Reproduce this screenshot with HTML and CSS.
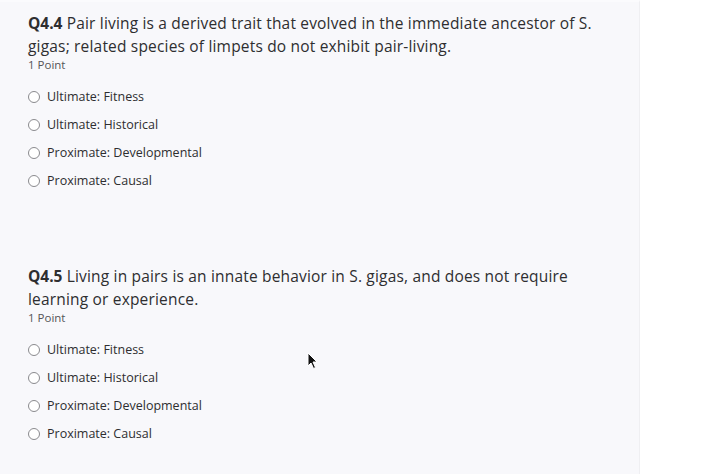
FILE: index.html
```html
<!DOCTYPE html>
<html>
<head>
<meta charset="utf-8">
<link rel="stylesheet" href="styles.css">
</head>
<body>
<div class="page">
  <main class="main">
    <section class="question">
      <h2 class="q-title"><b>Q4.4</b> Pair living is a derived trait that evolved in the immediate ancestor of S. gigas; related species of limpets do not exhibit pair-living.</h2>
      <div class="points">1 Point</div>
      <ul class="options">
        <li class="option"><span class="radio"></span>Ultimate: Fitness</li>
        <li class="option"><span class="radio"></span>Ultimate: Historical</li>
        <li class="option"><span class="radio"></span>Proximate: Developmental</li>
        <li class="option"><span class="radio"></span>Proximate: Causal</li>
      </ul>
    </section>
    <section class="question">
      <h2 class="q-title"><b>Q4.5</b> Living in pairs is an innate behavior in S. gigas, and does not require learning or experience.</h2>
      <div class="points">1 Point</div>
      <ul class="options">
        <li class="option"><span class="radio"></span>Ultimate: Fitness</li>
        <li class="option"><span class="radio"></span>Ultimate: Historical</li>
        <li class="option"><span class="radio"></span>Proximate: Developmental</li>
        <li class="option"><span class="radio"></span>Proximate: Causal</li>
      </ul>
    </section>
  </main>
  <aside class="side"></aside>
</div>
<svg class="cursor" width="12" height="18" viewBox="0 0 12 18"><path d="M1 1 L1 14 L4 11 L6.5 16.5 L8.5 15.5 L6 10 L10 10 Z" fill="#111" stroke="#fff" stroke-width="1"/></svg>
</body>
</html>
```

FILE: styles.css
```css
html, body {
  margin: 0;
  padding: 0;
  background: #ffffff;
}
body {
  font-family: "Open Sans", "Lato", sans-serif;
  color: #2e2e30;
  position: relative;
  height: 474px;
  overflow: hidden;
}
.page {
  display: flex;
  height: 474px;
}
.main {
  width: 640px;
  flex: none;
  background: #f8f8fb;
  border-right: 1px solid #efeff2;
  border-top: 2px solid #fbfbfd;
  box-sizing: border-box;
  padding: 10px 30px 0 28px;
}
.side {
  flex: 1;
  background: #ffffff;
}
.question {
  margin-bottom: 76px;
}
.q-title {
  margin: 0;
  font-size: 15.5px;
  letter-spacing: 0.18px;
  line-height: 23px;
  font-weight: 400;
  color: #2e2e30;
}
.q-title b {
  font-weight: 700;
  letter-spacing: 0;
}
.points {
  font-size: 11.5px;
  line-height: 14px;
  color: #555558;
  margin-top: 0;
}
.options {
  list-style: none;
  margin: 17px 0 0;
  padding: 0;
  display: flex;
  flex-direction: column;
  gap: 12px;
}
.option {
  display: flex;
  align-items: center;
  font-size: 12.5px;
  line-height: 16px;
  color: #2e2e30;
  height: 16px;
}
.radio {
  width: 10px;
  height: 10px;
  border: 1.5px solid #8a8a8e;
  border-radius: 50%;
  background: #fff;
  margin-right: 7px;
  flex: none;
}
.cursor {
  position: absolute;
  left: 307px;
  top: 352px;
}
```
